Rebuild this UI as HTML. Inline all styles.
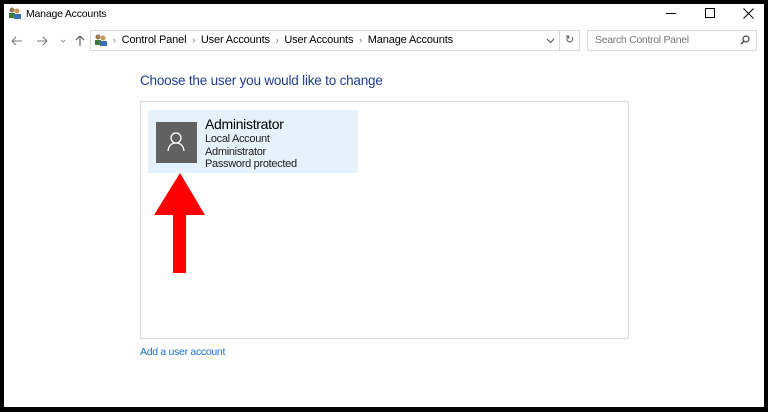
<!DOCTYPE html>
<html><head><meta charset="utf-8"><style>
*{margin:0;padding:0;box-sizing:border-box}
body{width:768px;height:412px;background:#000;position:relative;overflow:hidden;font-family:"Liberation Sans",sans-serif}
.win{position:absolute;left:4px;top:4px;width:760px;height:403px;background:#fff}
.abs{position:absolute}
.t{font-size:11px;color:#000;white-space:nowrap;letter-spacing:-0.3px}
</style></head><body>
<div class="win"></div>
<svg class="abs" style="left:8px;top:7px" width="14" height="12"><circle cx="4" cy="3" r="2.5" fill="#9a7b4f"/><circle cx="9" cy="4" r="2.5" fill="#c59a5a"/><rect x="1" y="6" width="6" height="5" fill="#3c7a3c"/><rect x="6" y="7" width="7" height="5" fill="#3a6fb5"/></svg>
<div class="abs t" style="left:26px;top:8px;font-size:10.5px;letter-spacing:-0.2px">Manage Accounts</div>
<div class="abs" style="left:666px;top:13px;width:10px;height:1px;background:#000"></div>
<div class="abs" style="left:705px;top:8px;width:10px;height:10px;border:1px solid #000"></div>
<svg class="abs" style="left:743px;top:8px" width="11" height="11"><path d="M0.5 0.5L10.5 10.5M10.5 0.5L0.5 10.5" stroke="#000" stroke-width="1"/></svg>
<svg class="abs" style="left:10px;top:35px" width="80" height="12"><path d="M2 6H12M2 6L6 2M2 6L6 10" stroke="#777" fill="none" stroke-width="1.1"/><path d="M27 6H37M37 6L33 2M37 6L33 10" stroke="#777" fill="none" stroke-width="1.1"/><path d="M51 5L53 7L55 5" stroke="#999" fill="none"/><path d="M70 1V11M70 1L66 5M70 1L74 5" stroke="#555" fill="none" stroke-width="1.1"/></svg>
<div class="abs" style="left:90px;top:30px;width:490px;height:21px;border:1px solid #d9d9d9"></div>
<div class="abs" style="left:559px;top:30px;width:1px;height:21px;background:#d9d9d9"></div>
<svg class="abs" style="left:94px;top:34px" width="14" height="12"><circle cx="4" cy="3" r="2.5" fill="#9a7b4f"/><circle cx="9" cy="4" r="2.5" fill="#c59a5a"/><rect x="1" y="6" width="6" height="5" fill="#3c7a3c"/><rect x="6" y="7" width="7" height="5" fill="#3a6fb5"/></svg>
<div class="abs t" style="left:113px;top:34px;font-size:11px;letter-spacing:-0.15px"><span style="color:#777;font-size:9px">›</span>&nbsp; Control Panel &nbsp;<span style="color:#777;font-size:9px">›</span>&nbsp; User Accounts &nbsp;<span style="color:#777;font-size:9px">›</span>&nbsp; User Accounts &nbsp;<span style="color:#777;font-size:9px">›</span>&nbsp; Manage Accounts</div>
<svg class="abs" style="left:546px;top:38px" width="9" height="6"><path d="M1 1L4.5 4.5L8 1" stroke="#555" fill="none" stroke-width="1.1"/></svg>
<div class="abs t" style="left:565px;top:33px;font-size:11px;color:#555">↻</div>
<div class="abs" style="left:587px;top:30px;width:170px;height:21px;border:1px solid #d9d9d9"></div>
<div class="abs t" style="left:595px;top:34px;color:#777;font-size:10.5px">Search Control Panel</div>
<svg class="abs" style="left:740px;top:35px" width="10" height="10"><circle cx="6" cy="4" r="3" fill="none" stroke="#444" stroke-width="1.2"/><line x1="4" y1="6" x2="1" y2="9" stroke="#444" stroke-width="1.4"/></svg>
<div class="abs t" style="left:140px;top:73px;font-size:13.5px;color:#1e3c96;letter-spacing:-0.2px">Choose the user you would like to change</div>
<div class="abs" style="left:140px;top:101px;width:489px;height:238px;border:1px solid #d9d9d9"></div>
<div class="abs" style="left:148px;top:110px;width:210px;height:63px;background:#e5f1fb"></div>
<div class="abs" style="left:156px;top:122px;width:41px;height:41px;background:#616161"></div>
<svg class="abs" style="left:166px;top:131px" width="20" height="22"><circle cx="10" cy="7" r="5" fill="none" stroke="#fff" stroke-width="1.3"/><path d="M2 20 Q3 12 10 12 Q17 12 18 20" fill="none" stroke="#fff" stroke-width="1.3"/></svg>
<div class="abs t" style="left:205px;top:116px;font-size:14px;color:#000">Administrator</div>
<div class="abs t" style="left:205px;top:133px;color:#222">Local Account</div>
<div class="abs t" style="left:205px;top:146px;color:#222">Administrator</div>
<div class="abs t" style="left:205px;top:158px;color:#222">Password protected</div>
<svg class="abs" style="left:150px;top:170px" width="60" height="106"><polygon points="30,3 55,45 36,45 36,103 23,103 23,45 4,45" fill="#ff0000"/></svg>
<div class="abs t" style="left:140px;top:346px;color:#1a6fd0;font-size:10.5px">Add a user account</div>
</body></html>
